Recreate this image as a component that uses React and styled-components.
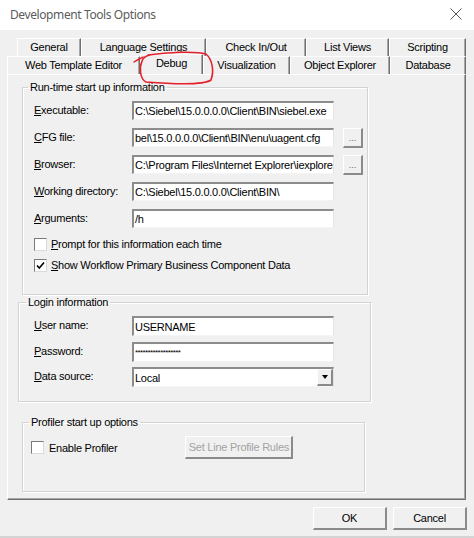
import React from 'react';
import styled, { createGlobalStyle } from 'styled-components';

const GlobalStyle = createGlobalStyle`
  html, body {
    margin: 0;
    padding: 0;
    background: #f0f0f0;
  }
  * {
    box-sizing: border-box;
  }
`;

const Window = styled.div`
  position: relative;
  width: 474px;
  height: 538px;
  display: flex;
  flex-direction: column;
  background: #f0f0f0;
  border-bottom: 2px solid #d4d4d4;
  font-family: 'Liberation Sans', Arial, sans-serif;
  font-size: 11px;
  letter-spacing: -0.25px;
  color: #000;
`;

const TitleBar = styled.div`
  height: 30px;
  flex: none;
  display: flex;
  align-items: center;
  justify-content: space-between;
  padding: 0 10px 2px 10px;
  background: #fff;
`;

const Title = styled.span`
  font-family: 'Noto Sans', 'Open Sans', sans-serif;
  font-size: 12px;
  letter-spacing: -0.4px;
  color: #5c5c5c;
`;

const CloseIcon = styled.svg`
  width: 12px;
  height: 12px;
  margin-right: 2px;
`;

const Body = styled.div`
  flex: 1;
  display: flex;
  flex-direction: column;
  padding: 8px 7px 0 7px;
`;

const TabStrip = styled.div`
  display: flex;
  flex-direction: column;
`;

const TabRow = styled.div`
  display: flex;
  height: 18px;
  padding-left: ${p => p.$indent || 0}px;
`;

const Tab = styled.div`
  width: ${p => p.$w}px;
  height: ${p => (p.$active ? 20 : 18)}px;
  margin-top: ${p => (p.$active ? -2 : 0)}px;
  display: flex;
  align-items: center;
  justify-content: center;
  padding-bottom: ${p => (p.$active ? 3 : 1)}px;
  border-top: 1px solid #fff;
  border-left: 1px solid #fff;
  border-right: 1px solid #6f6f6f;
  box-shadow: inset -1px 0 #a8a8a8;
  background: #f0f0f0;
  white-space: nowrap;
  position: relative;
  z-index: ${p => (p.$active ? 2 : 1)};
`;

const Panel = styled.div`
  width: 459px;
  height: 426px;
  display: flex;
  flex-direction: column;
  align-items: flex-start;
  border-top: 1px solid #fff;
  border-left: 1px solid #fff;
  border-right: 1px solid #6f6f6f;
  border-bottom: 1px solid #6f6f6f;
  box-shadow: inset -1px -1px #a8a8a8;
`;

const Group = styled.fieldset`
  margin: ${p => p.$top}px 0 0 ${p => p.$left}px;
  width: ${p => p.$w}px;
  padding: 7px 0 ${p => p.$bottom}px ${p => p.$pad}px;
  border: 1px solid #d3d3d3;
  box-shadow: inset 1px 1px #fff, 1px 1px #fff;
  min-inline-size: 0;
`;

const Legend = styled.legend`
  padding: 0 2px;
  margin-left: ${p => p.$shift}px;
  line-height: 14px;
`;

const FormGrid = styled.div`
  display: grid;
  grid-template-columns: 89px 202px 20px;
  column-gap: 9px;
  grid-auto-rows: ${p => p.$rowH}px;
  row-gap: ${p => p.$gap}px;
  align-items: center;
`;

const Label = styled.label`
  grid-column: 1;
  white-space: nowrap;
  padding-bottom: 2px;

  u {
    text-decoration: underline;
  }
`;

const Field = styled.div`
  grid-column: 2;
  position: relative;
  height: ${p => p.$h || 19}px;
  padding: 0 0 0 1px;
  display: flex;
  align-items: center;
  background: #fff;
  border-top: 2px solid #8c8c8c;
  border-left: 2px solid #8c8c8c;
  border-right: 1px solid #e4e4e4;
  border-bottom: 1px solid #f4f4f4;
  overflow: hidden;
  white-space: nowrap;
  font-size: ${p => (p.$small ? 8 : 11)}px;
  letter-spacing: ${p => (p.$small ? '-0.6px' : '-0.25px')};
`;

const Ellipsis = styled.button`
  grid-column: 3;
  align-self: start;
  width: 20px;
  height: 20px;
  padding: 0 0 3px 0;
  display: flex;
  align-items: flex-end;
  justify-content: center;
  font: inherit;
  font-size: 9px;
  color: #666;
  background: #f0f0f0;
  border-top: 1px solid #fff;
  border-left: 1px solid #fff;
  border-right: 2px solid #8a8a8a;
  border-bottom: 2px solid #8a8a8a;
`;

const DropArrow = styled.span`
  position: absolute;
  right: 0;
  top: 0;
  bottom: 0;
  width: 16px;
  display: flex;
  align-items: center;
  justify-content: center;
  background: #f0f0f0;
  border-top: 1px solid #fff;
  border-left: 1px solid #fff;
  border-right: 2px solid #8a8a8a;
  border-bottom: 2px solid #8a8a8a;

  &::after {
    content: '';
    border-left: 3.5px solid transparent;
    border-right: 3.5px solid transparent;
    border-top: 4px solid #000;
  }
`;

const CheckList = styled.div`
  display: flex;
  flex-direction: column;
  gap: 7px;
  margin-top: ${p => p.$top || 0}px;
`;

const CheckRow = styled.div`
  display: flex;
  align-items: center;
  gap: ${p => p.$gap || 4}px;
  height: 14px;
  white-space: nowrap;
`;

const Box = styled.span`
  width: 13px;
  height: 13px;
  flex: none;
  display: flex;
  align-items: center;
  justify-content: center;
  background: #fff;
  border-top: 1px solid #7a7a7a;
  border-left: 1px solid #7a7a7a;
  border-right: 1px solid #dadada;
  border-bottom: 1px solid #dadada;
`;

const ProfilerRow = styled.div`
  display: flex;
  align-items: center;
`;

const RaisedButton = styled.button`
  width: ${p => p.$w}px;
  height: ${p => p.$h}px;
  margin-left: ${p => p.$ml || 0}px;
  padding: 0;
  font-family: 'Liberation Sans', Arial, sans-serif;
  font-size: 11px;
  letter-spacing: -0.25px;
  color: ${p => (p.disabled ? '#a3a3a3' : '#000')};
  background: #f0f0f0;
  border-top: 1px solid #fff;
  border-left: 1px solid #fff;
  border-right: 2px solid #8a8a8a;
  border-bottom: 2px solid #8a8a8a;
`;

const Footer = styled.div`
  display: flex;
  justify-content: flex-end;
  gap: 6px;
  margin-top: 7px;
`;

const Mark = styled.svg`
  position: absolute;
  left: 0;
  top: 0;
  z-index: 5;
  width: 474px;
  height: 538px;
  pointer-events: none;
`;

const Check = ({ checked }) => (
  <Box>
    {checked && (
      <svg width="9" height="9" viewBox="0 0 9 9">
        <polyline points="1,4.5 3.3,7 8,1.5" fill="none" stroke="#000" strokeWidth="1.6" />
      </svg>
    )}
  </Box>
);

const row1 = [
  ['General', 64],
  ['Language Settings', 125],
  ['Check In/Out', 100],
  ['List Views', 83],
  ['Scripting', 77],
];

const row2 = [
  ['Web Template Editor', 133],
  ['Debug', 63],
  ['Visualization', 87],
  ['Object Explorer', 100],
  ['Database', 76],
];

export default function App() {
  return (
    <>
      <GlobalStyle />
      <Window>
        <TitleBar>
          <Title>Development Tools Options</Title>
          <CloseIcon viewBox="0 0 12 12">
            <path d="M0.5 0.5 L11.5 11.5 M11.5 0.5 L0.5 11.5" stroke="#555" strokeWidth="1" />
          </CloseIcon>
        </TitleBar>

        <Body>
          <TabStrip>
            <TabRow $indent={10}>
              {row1.map(([t, w]) => (
                <Tab key={t} $w={w}>{t}</Tab>
              ))}
            </TabRow>
            <TabRow>
              {row2.map(([t, w]) => (
                <Tab key={t} $w={w} $active={t === 'Debug'}>{t}</Tab>
              ))}
            </TabRow>
          </TabStrip>

          <Panel>
            <Group $top={5} $left={14} $w={346} $pad={11} $bottom={22}>
              <Legend $shift={-6}>Run-time start up information</Legend>
              <FormGrid $rowH={19} $gap={8}>
                <Label><u>E</u>xecutable:</Label>
                <Field>C:\Siebel\15.0.0.0.0\Client\BIN\siebel.exe</Field>
                <Label><u>C</u>FG file:</Label>
                <Field>bel\15.0.0.0.0\Client\BIN\enu\uagent.cfg</Field>
                <Ellipsis>...</Ellipsis>
                <Label><u>B</u>rowser:</Label>
                <Field>C:\Program Files\Internet Explorer\iexplore</Field>
                <Ellipsis>...</Ellipsis>
                <Label><u>W</u>orking directory:</Label>
                <Field>C:\Siebel\15.0.0.0.0\Client\BIN\</Field>
                <Label><u>A</u>rguments:</Label>
                <Field>/h</Field>
              </FormGrid>
              <CheckList $top={9}>
                <CheckRow>
                  <Check />
                  <span><u>P</u>rompt for this information each time</span>
                </CheckRow>
                <CheckRow>
                  <Check checked />
                  <span><u>S</u>how Workflow Primary Business Component Data</span>
                </CheckRow>
              </CheckList>
            </Group>

            <Group $top={0} $left={10} $w={353} $pad={15} $bottom={14}>
              <Legend $shift={-8}>Login information</Legend>
              <FormGrid $rowH={20} $gap={5.5}>
                <Label><u>U</u>ser name:</Label>
                <Field $h={20}>USERNAME</Field>
                <Label><u>P</u>assword:</Label>
                <Field $h={20} $small>******************</Field>
                <Label><u>D</u>ata source:</Label>
                <Field $h={20}>
                  Local
                  <DropArrow />
                </Field>
              </FormGrid>
            </Group>

            <Group $top={13} $left={14} $w={343} $pad={8} $bottom={32}>
              <Legend $shift={-2}>Profiler start up options</Legend>
              <ProfilerRow>
                <CheckRow $gap={5}>
                  <Check />
                  <span>Enable Profiler</span>
                </CheckRow>
                <RaisedButton disabled $w={108} $h={23} $ml={68}>
                  Set Line Profile Rules
                </RaisedButton>
              </ProfilerRow>
            </Group>
          </Panel>

          <Footer>
            <RaisedButton $w={74} $h={23}>OK</RaisedButton>
            <RaisedButton $w={74} $h={23}>Cancel</RaisedButton>
          </Footer>
        </Body>

        <Mark viewBox="0 0 474 538">
          <path
            d="M148 55 C168 52 196 51 206 54 C213 60 214 72 211 80 C204 85 172 84 146 82 C140 79 139 68 142 61 C143 58 145 56 150 55"
            fill="none"
            stroke="#e3202b"
            strokeWidth="1.6"
            strokeLinecap="round"
          />
          <path d="M134 62 C137 60 140 59 143 57" fill="none" stroke="#e3202b" strokeWidth="1.5" strokeLinecap="round" />
        </Mark>
      </Window>
    </>
  );
}
